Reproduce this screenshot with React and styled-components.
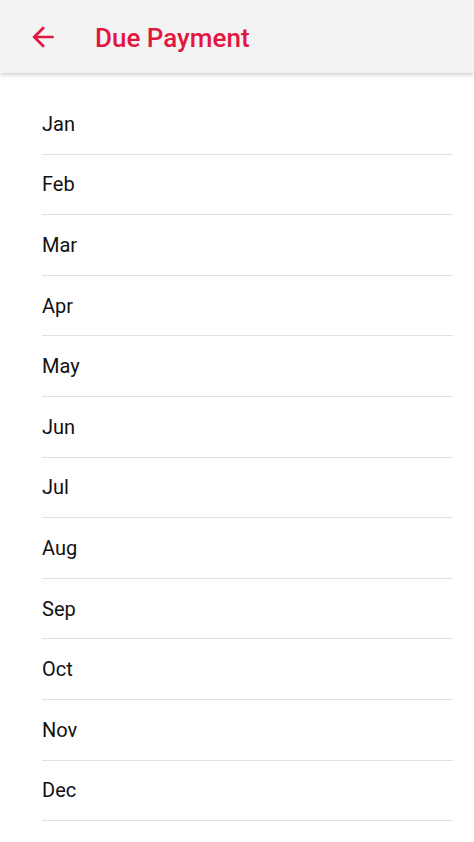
import React from 'react';
import styled, { createGlobalStyle } from 'styled-components';

const months = ['Jan', 'Feb', 'Mar', 'Apr', 'May', 'Jun', 'Jul', 'Aug', 'Sep', 'Oct', 'Nov', 'Dec'];

function App() {
  return (
    <Page>
      <GlobalStyle />
      <Header>
        <BackButton aria-label="Back">
          <svg width="32" height="32" viewBox="0 0 24 24" fill="#e2173f">
            <path d="M20 11H7.83l5.59-5.59L12 4l-8 8 8 8 1.41-1.41L7.83 13H20v-2z" />
          </svg>
        </BackButton>
        <Title>Due Payment</Title>
      </Header>
      <List>
        {months.map((m) => (
          <Item key={m}>{m}</Item>
        ))}
      </List>
    </Page>
  );
}

const GlobalStyle = createGlobalStyle`
  body {
    margin: 0;
    background: #fff;
    font-family: Roboto, "Noto Sans", sans-serif;
  }
`;

const Page = styled.div`
  display: flex;
  flex-direction: column;
  min-height: 842px;
  background: #fff;
`;

const Header = styled.header`
  display: flex;
  align-items: center;
  height: 73px;
  padding-left: 27px;
  background: #f4f3f4;
  box-shadow: 0 2px 4px rgba(0, 0, 0, 0.18);
  position: relative;
  z-index: 1;
`;

const BackButton = styled.button`
  display: flex;
  align-items: center;
  justify-content: center;
  width: 32px;
  height: 32px;
  padding: 0;
  border: none;
  background: none;
  margin-top: 1px;
`;

const Title = styled.h1`
  margin: 2px 0 0 36px;
  font-size: 26px;
  font-weight: 500;
  color: #e2173f;
`;

const List = styled.ul`
  list-style: none;
  margin: 21px 21px 0 42px;
  padding: 0;
`;

const Item = styled.li`
  display: flex;
  align-items: center;
  height: 60.6px;
  box-sizing: border-box;
  border-bottom: 1px solid #e0e0e0;
  font-size: 20px;
  color: #111;
`;

export default App;
